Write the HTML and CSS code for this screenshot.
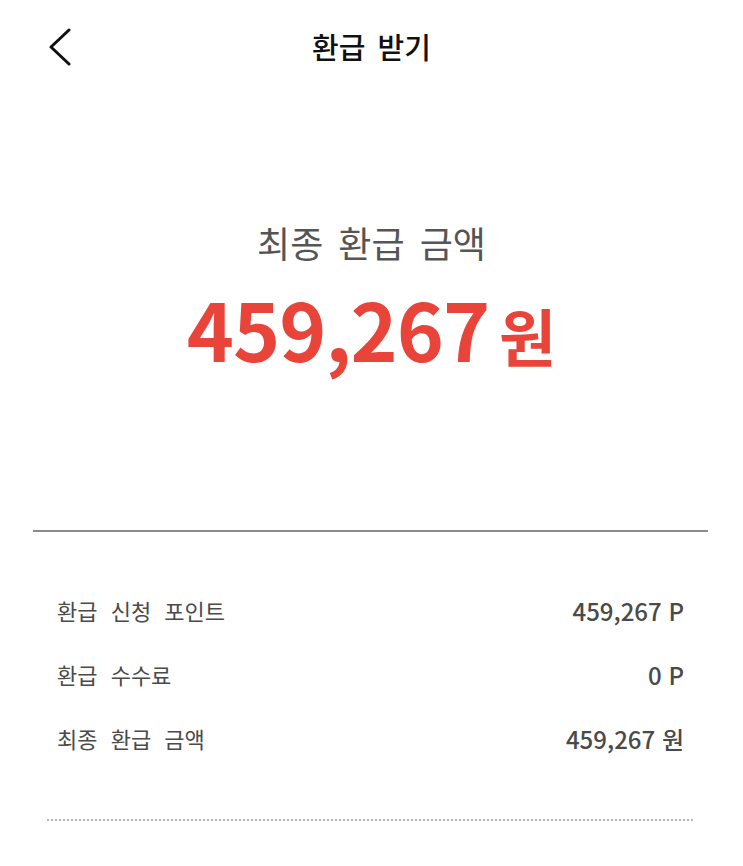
FILE: index.html
```html
<!DOCTYPE html>
<html lang="ko">
<head>
  <meta charset="UTF-8">
  <meta name="viewport" content="width=device-width, initial-scale=1.0">
  <title>환급 받기</title>
  <link rel="stylesheet" href="styles.css">
</head>
<body>
  <div class="page">
    <div class="header">
      <button class="back-btn" type="button" aria-label="뒤로">
        <svg width="26" height="38" viewBox="0 0 26 38">
          <path d="M21 2 L3 19 L21 36" fill="none" stroke="#111" stroke-width="3" stroke-linecap="round" stroke-linejoin="round"/>
        </svg>
      </button>
      <h1>환급 받기</h1>
      <div></div>
    </div>

    <div class="summary">
      <h2>최종 환급 금액</h2>
      <p class="total">459,267<span class="unit">원</span></p>
    </div>

    <div class="divider"></div>

    <div class="details">
      <div class="row">
        <span class="label">환급 신청 포인트</span>
        <span class="value">459,267 P</span>
      </div>
      <div class="row">
        <span class="label">환급 수수료</span>
        <span class="value">0 P</span>
      </div>
      <div class="row">
        <span class="label">최종 환급 금액</span>
        <span class="value">459,267 원</span>
      </div>
    </div>

    <div class="dotted"></div>
  </div>
</body>
</html>
```

FILE: styles.css
```css
:root {
  --text-color: #111111;
  --sub-text: #555555;
  --detail-text: #4a4a4a;
  --accent: #e8443a;
  --line-color: #8c8c8c;
  --dot-color: #b4b4b4;
}

* {
  margin: 0;
  padding: 0;
  box-sizing: border-box;
  font-family: "Noto Sans CJK KR", "Noto Sans", sans-serif;
}

body {
  background-color: #ffffff;
  color: var(--text-color);
}

.page {
  width: 100%;
  min-height: 100vh;
}

.header {
  height: 92px;
  display: grid;
  grid-template-columns: 1fr auto 1fr;
  align-items: center;
}

.back-btn {
  justify-self: start;
  margin-left: 48px;
  margin-top: 2px;
  background: none;
  border: none;
  cursor: pointer;
  display: flex;
}

.header h1 {
  font-size: 29px;
  font-weight: 500;
  line-height: 1.4;
  word-spacing: 4px;
  color: var(--text-color);
}

.summary {
  margin-top: 125px;
  text-align: center;
}

.summary h2 {
  font-size: 36px;
  font-weight: 400;
  line-height: 1.4;
  word-spacing: 5px;
  color: var(--sub-text);
}

.total {
  margin-top: 20px;
  font-size: 80px;
  font-weight: 700;
  line-height: 1;
  letter-spacing: -1px;
  color: var(--accent);
}

.total .unit {
  font-size: 62px;
  letter-spacing: 0;
  margin-left: 10px;
}

.divider {
  height: 2px;
  margin: 163px 35px 0 33px;
  background-color: var(--line-color);
}

.details {
  padding: 46px 59px 49px 57px;
}

.row {
  height: 64px;
  display: flex;
  align-items: center;
  justify-content: space-between;
}

.label {
  font-size: 22px;
  font-weight: 400;
  word-spacing: 7px;
  color: var(--detail-text);
}

.value {
  font-size: 24px;
  font-weight: 500;
  color: var(--detail-text);
}

.dotted {
  margin: 0 50px 0 47px;
  border-top: 2px dotted var(--dot-color);
}
```
